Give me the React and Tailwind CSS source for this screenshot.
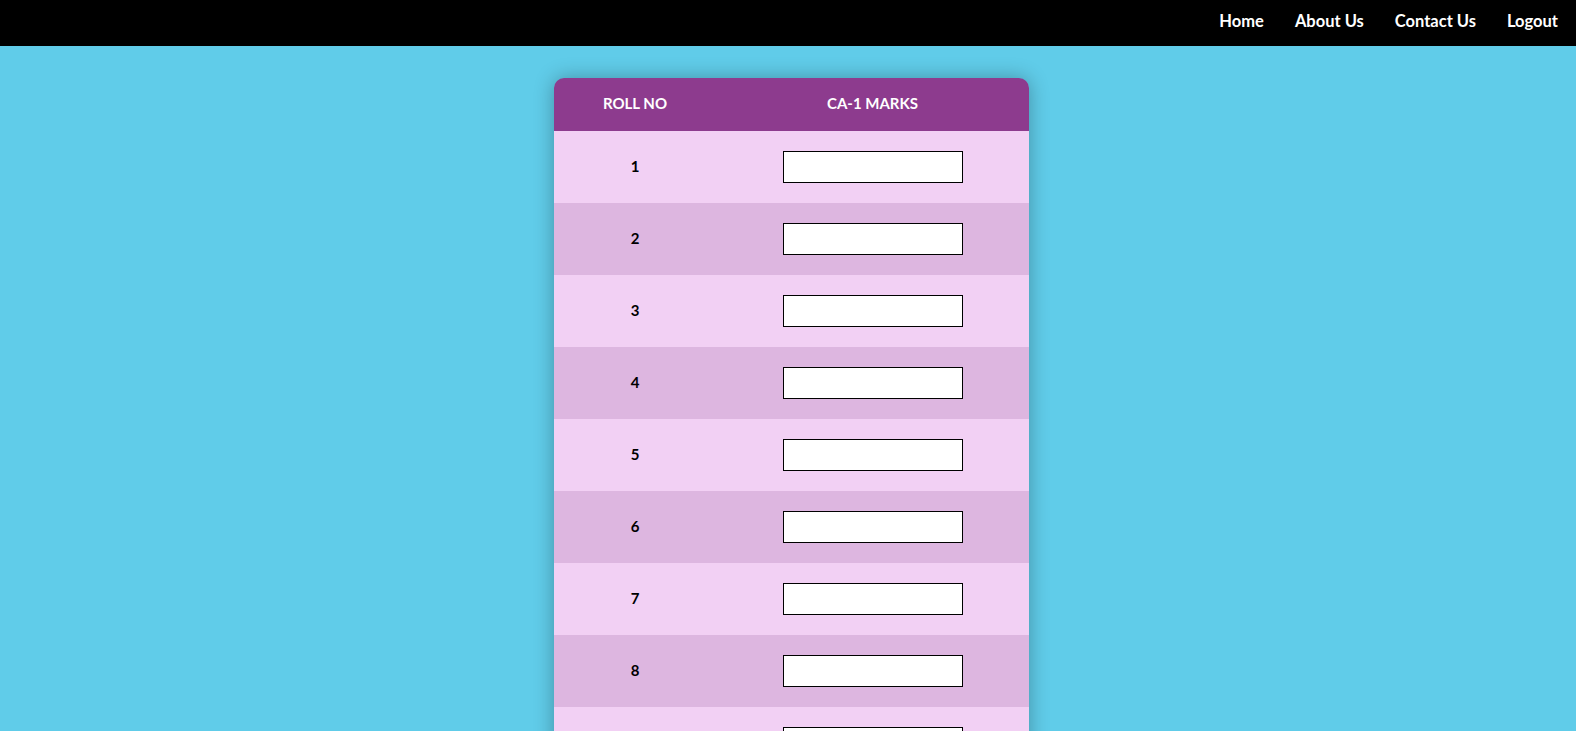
import React from 'react';

const rolls = [1, 2, 3, 4, 5, 6, 7, 8, 9, 10];

const App = () => {
  return (
    <div className="min-h-screen bg-[#60cce9]" style={{ fontFamily: 'Lato, "Open Sans", sans-serif' }}>
      {/* Barre de navigation */}
      <nav className="h-[46px] bg-black flex items-center justify-end gap-[31px] pr-[18px] pb-[3px]">
        <a href="#" className="text-white font-bold text-[16.5px]">Home</a>
        <a href="#" className="text-white font-bold text-[16.5px]">About Us</a>
        <a href="#" className="text-white font-bold text-[16.5px]">Contact Us</a>
        <a href="#" className="text-white font-bold text-[16.5px]">Logout</a>
      </nav>

      <div className="flex justify-center pt-[32px] pl-[7px] pb-10">
        <table className="w-[475px] border-collapse rounded-[10px] overflow-hidden shadow-[0_0_20px_rgba(0,0,0,0.3)]">
          <thead>
            <tr className="bg-[#8d3b8e] h-[53px]">
              <th className="w-[162px] text-white font-bold text-[15px] text-center pb-[2px]">ROLL NO</th>
              <th className="text-white font-bold text-[15px] text-center pb-[2px]">CA-1 MARKS</th>
            </tr>
          </thead>
          <tbody>
            {rolls.map((r, i) => (
              <tr key={r} className={i % 2 === 0 ? 'bg-[#f2d0f4] h-[72px]' : 'bg-[#ddb6e0] h-[72px]'}>
                <td className="text-center font-bold text-[15px] text-black pb-[2px]">{r}</td>
                <td className="text-center">
                  <input type="text" className="w-[180px] h-[32px] bg-white border border-black align-middle" />
                </td>
              </tr>
            ))}
          </tbody>
        </table>
      </div>
    </div>
  );
};

export default App;
